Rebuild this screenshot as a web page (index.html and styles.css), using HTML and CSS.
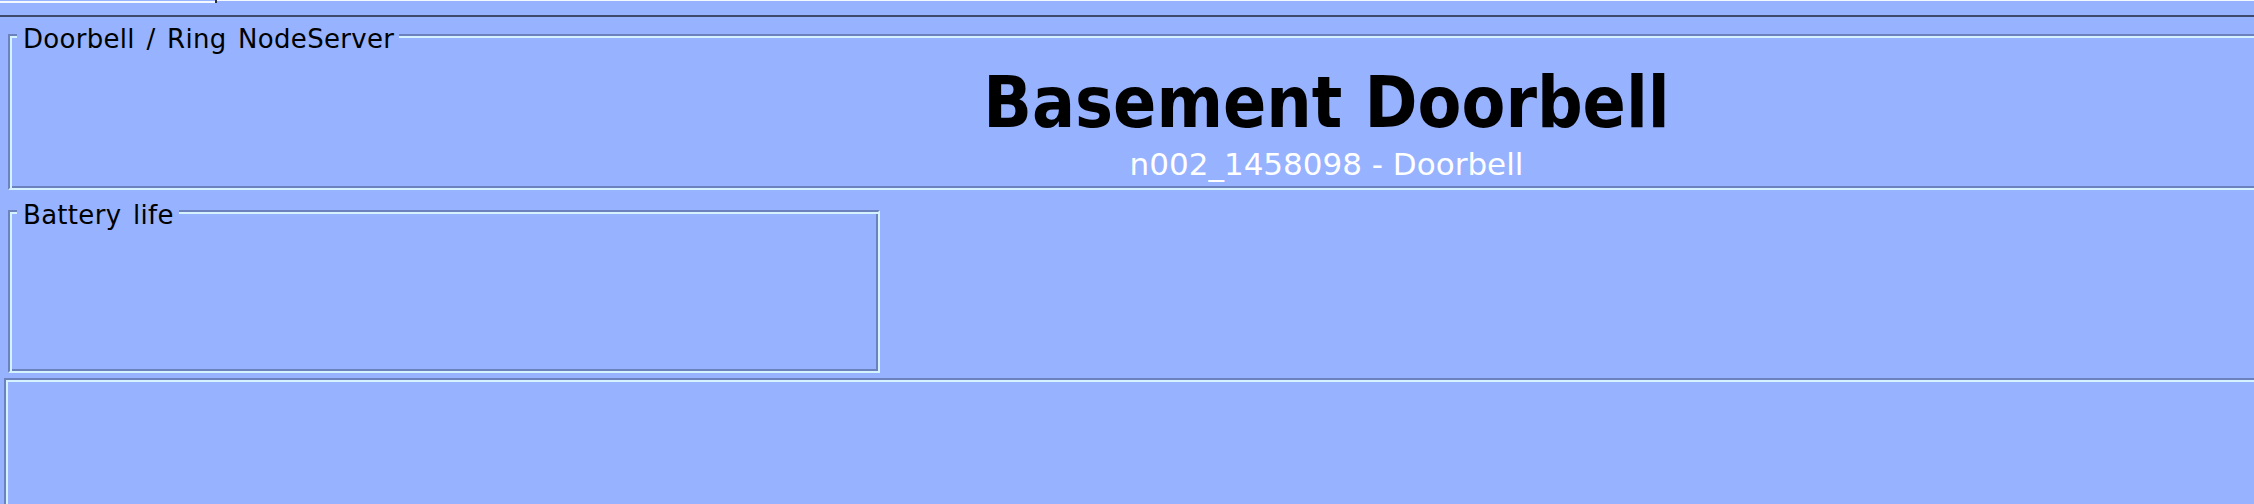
FILE: index.html
```
<!DOCTYPE html>
<html lang="en">
<head>
<meta charset="utf-8">
<title>Basement Doorbell</title>
<link rel="stylesheet" href="styles.css">
</head>
<body>
<div class="tabstrip">
  <span class="tab-edge-a"></span>
  <span class="tab-tick"></span>
  <span class="tab-edge-b"></span>
</div>
<div class="rule"></div>
<fieldset class="group group-main">
  <legend class="group-title">Doorbell / Ring NodeServer</legend>
  <div class="heading">
    <h1 class="title">Basement Doorbell</h1>
    <div class="subtitle">n002_1458098 - Doorbell</div>
  </div>
</fieldset>
<fieldset class="group group-battery">
  <legend class="group-title">Battery life</legend>
  <div class="battery-body"></div>
</fieldset>
<div class="panel-lower"></div>
</body>
</html>
```
FILE: styles.css
```
html, body {
  margin: 0;
  padding: 0;
  overflow: hidden;
}
body {
  background: #97b3ff;
  width: 2254px;
  height: 504px;
  font-family: "DejaVu Sans", "Liberation Sans", sans-serif;
  color: #000;
}
.tabstrip {
  display: flex;
  align-items: flex-start;
  height: 15px;
}
.tab-edge-a {
  width: 215px;
  height: 2px;
  margin-top: 1px;
  background: #f4f9ff;
}
.tab-tick {
  width: 2px;
  height: 3px;
  background: #2a2f40;
}
.tab-edge-b {
  flex: 1;
  height: 1px;
  background: #f4f9ff;
}
.rule {
  height: 2px;
  background: #3d4a6d;
}
.group {
  margin: 0 0 0 8px;
  padding: 0 8px 0 7px;
  border-style: solid;
  border-width: 2px;
  border-color: #6b82bf #d4f3ff #d4f3ff #6b82bf;
  box-shadow: inset 2px 2px 0 0 #d4f3ff, inset -2px -2px 0 0 #6b82bf;
  min-inline-size: 0;
}
.group-title {
  padding: 9px 5px 0 6px;
  font-size: 26px;
  line-height: 30px;
  letter-spacing: 0.3px;
  word-spacing: 3px;
  background: linear-gradient(to bottom, transparent 15px, #97b3ff 15px);
}
.group-main {
  margin-top: -2px;
  width: 2237px;
  padding-right: 0;
  padding-bottom: 8px;
  border-right-width: 0;
  box-shadow: inset 2px 2px 0 0 #d4f3ff, inset 0 -2px 0 0 #6b82bf;
}
.heading {
  margin-top: 13px;
  padding-left: 382px;
  text-align: center;
}
.title {
  margin: 0;
  font-family: "DejaVu Sans Condensed", "DejaVu Sans", sans-serif;
  font-stretch: condensed;
  font-weight: bold;
  font-size: 71px;
  line-height: 71px;
}
.subtitle {
  margin-top: 11px;
  font-size: 31px;
  line-height: 31px;
  color: #fff;
}
.group-battery {
  margin-top: 1px;
  width: 853px;
}
.battery-body {
  height: 141px;
}
.panel-lower {
  margin: 5px 0 0 4px;
  width: 2250px;
  height: 124px;
  border-style: solid;
  border-width: 2px 0 0 2px;
  border-color: #6b82bf;
  box-shadow: inset 2px 2px 0 0 #d4f3ff;
}
```
